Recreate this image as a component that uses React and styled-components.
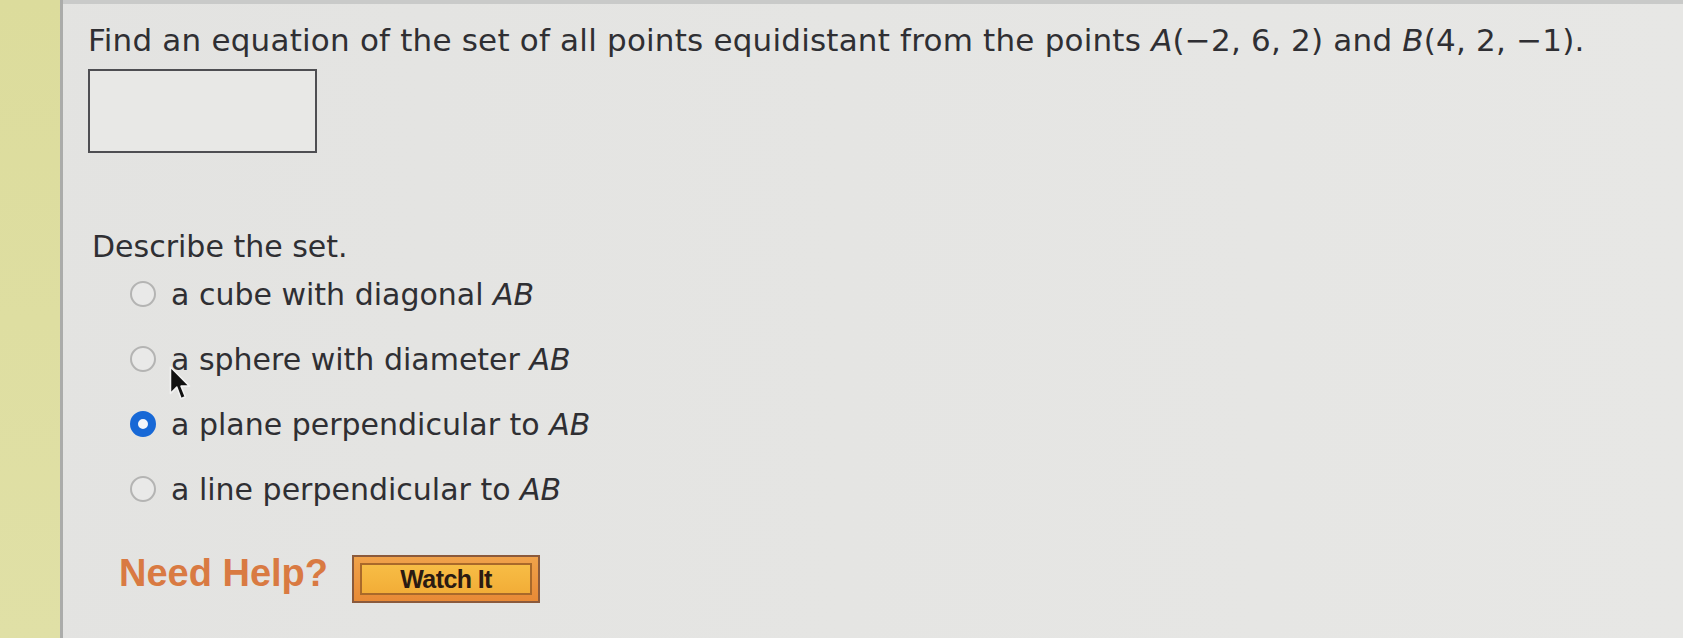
import React from "react";
import styled, { createGlobalStyle } from "styled-components";

const Global = createGlobalStyle`
  html, body {
    margin: 0;
    padding: 0;
    background: #e5e5e3;
  }
  body {
    font-family: "DejaVu Sans", Verdana, sans-serif;
    color: #2b2b2e;
  }
`;

const Page = styled.div`
  position: relative;
  display: flex;
  width: 1683px;
  height: 638px;
  overflow: hidden;
  background: linear-gradient(90deg, #e3e3e1, #e7e7e5);
`;

const Strip = styled.div`
  width: 60px;
  flex: none;
  background: linear-gradient(180deg, #dcdc9c, #e0e0a6);
  border-right: 3px solid #abacaa;
`;

const Main = styled.div`
  flex: 1;
  border-top: 4px solid #c9cac9;
  padding: 18px 0 0 25px;
`;

const Question = styled.p`
  margin: 0;
  font-size: 31px;
  line-height: 36px;
  letter-spacing: 0.2px;
  color: #2f2f33;
`;

const Var = styled.i`
  font-style: italic;
`;

const AnswerBox = styled.div`
  margin-top: 11px;
  width: 225px;
  height: 80px;
  border: 2px solid #4e4e52;
  background: #e8e8e6;
`;

const Describe = styled.p`
  margin: 78px 0 0 4px;
  font-size: 30px;
  line-height: 32px;
  color: #2f2f33;
`;

const Options = styled.div`
  display: flex;
  flex-direction: column;
  gap: 33px;
  margin-top: 15px;
  padding-left: 42px;
`;

const Option = styled.label`
  display: flex;
  align-items: center;
  height: 32px;
  gap: 15px;
  font-size: 30px;
  color: #2f2f33;
`;

const Radio = styled.span`
  width: 26px;
  height: 26px;
  box-sizing: border-box;
  border-radius: 50%;
  flex: none;
  border: ${(p) => (p.checked ? "8px solid #1768d6" : "2px solid #b4b4b3")};
  background: ${(p) => (p.checked ? "#f4f6fa" : "#e9e9e8")};
`;

const HelpRow = styled.div`
  display: flex;
  align-items: flex-start;
  gap: 24px;
  margin-top: 44px;
  padding-left: 31px;
`;

const NeedHelp = styled.span`
  font-family: "Liberation Sans", Arial, sans-serif;
  font-weight: bold;
  font-size: 38px;
  line-height: 48px;
  color: #d97a42;
`;

const WatchButton = styled.button`
  margin-top: 6px;
  width: 188px;
  height: 48px;
  padding: 6px;
  box-sizing: border-box;
  border: 2px solid #8b5a3c;
  background: linear-gradient(#f0a24a, #e88a36);
  cursor: pointer;
`;

const WatchInner = styled.span`
  display: flex;
  align-items: center;
  justify-content: center;
  height: 100%;
  box-sizing: border-box;
  border: 2px solid #a9692a;
  background: linear-gradient(#f7bd45, #f2ad37);
  font-family: "Liberation Sans", Arial, sans-serif;
  font-weight: bold;
  font-size: 25px;
  letter-spacing: -0.6px;
  color: #2a1a12;
`;

const Pointer = styled.svg`
  position: absolute;
  left: 168px;
  top: 366px;
`;

const options = [
  { text: "a cube with diagonal ", checked: false },
  { text: "a sphere with diameter ", checked: false },
  { text: "a plane perpendicular to ", checked: true },
  { text: "a line perpendicular to ", checked: false },
];

export default function App() {
  return (
    <Page>
      <Global />
      <Strip />
      <Main>
        <Question>
          Find an equation of the set of all points equidistant from the points{" "}
          <Var>A</Var>(−2, 6, 2) and <Var>B</Var>(4, 2, −1).
        </Question>
        <AnswerBox />
        <Describe>Describe the set.</Describe>
        <Options>
          {options.map((o) => (
            <Option key={o.text}>
              <Radio checked={o.checked} />
              <span>
                {o.text}
                <Var>AB</Var>
              </span>
            </Option>
          ))}
        </Options>
        <HelpRow>
          <NeedHelp>Need Help?</NeedHelp>
          <WatchButton>
            <WatchInner>Watch It</WatchInner>
          </WatchButton>
        </HelpRow>
      </Main>
      <Pointer width="24" height="36" viewBox="0 0 22 34">
        <path
          d="M2 1 L2 26 L8 20 L12 31 L16 29 L12 19 L20 19 Z"
          fill="#111"
          stroke="#f2f2f2"
          strokeWidth="1.5"
          strokeLinejoin="round"
        />
      </Pointer>
    </Page>
  );
}
